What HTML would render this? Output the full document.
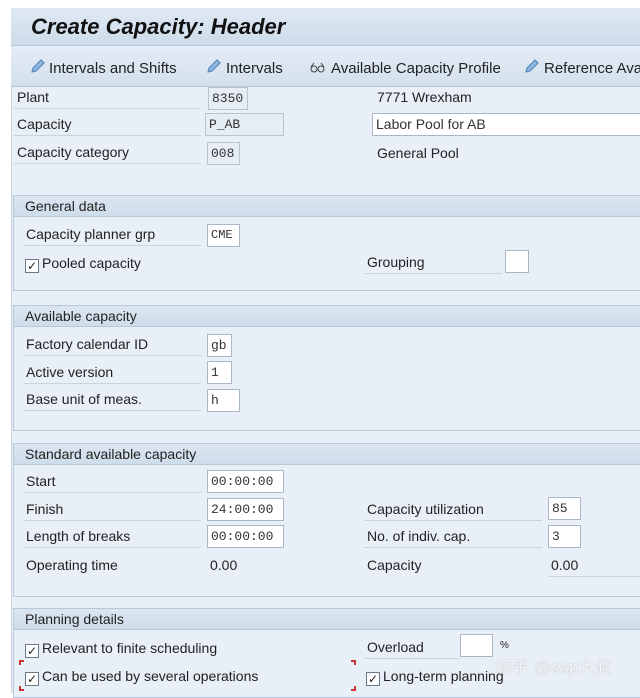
<!DOCTYPE html>
<html><head><meta charset="utf-8">
<style>
*{margin:0;padding:0;box-sizing:border-box}
body{width:640px;height:693px;overflow:hidden;background:#fff;font-family:"Liberation Sans","DejaVu Sans",sans-serif;font-size:14px;color:#222;position:relative}
.a{position:absolute}
#main{left:11px;top:8px;width:629px;height:685px;background:#e8eff7;border-left:1px solid #c6d3e0}
#title{left:11px;top:8px;width:629px;height:38px;background:linear-gradient(#dfe9f3,#cddcea);border-bottom:1px solid #b7c9da}
#title span{position:absolute;left:20px;top:6px;font-size:22px;font-weight:bold;font-style:italic;color:#111}
#tb{left:11px;top:47px;width:629px;height:40px;background:linear-gradient(#e4ecf5,#d3e0ec);border-bottom:1px solid #b7c9da}
.tbi{position:absolute;top:13px;font-size:15px;color:#222;white-space:nowrap}
.lbl{position:absolute;height:22px;line-height:20px;border-bottom:1px solid #c9d3dd;white-space:nowrap}
.in{position:absolute;height:23px;background:#fff;border:1px solid #a9b7c6;font-family:"Liberation Mono",monospace;font-size:13px;line-height:21px;padding-left:3px;color:#333}
.ro{background:#e6edf4;border-color:#b8c4d0}
.grp{position:absolute;left:13px;width:640px;border:1px solid #b9c8d8;background:#e8eff7}
.gh{height:21px;background:linear-gradient(#dbe6f1,#cfdcea);border-bottom:1px solid #b9c8d8;padding-left:11px;line-height:20px}
.txt{position:absolute;white-space:nowrap}
.cb{display:inline-block;width:14px;height:14px;border:1px solid #6a7a89;background:#fff;vertical-align:-2px;margin-right:3px;font-size:12px;line-height:12px;text-align:center;color:#222;font-weight:bold}
.rc{position:absolute;width:5px;height:5px;border-color:#c33;border-style:solid;border-width:0}
</style></head><body>
<div class="a" id="main"></div>
<div class="a" id="title"><span>Create Capacity: Header</span></div>
<div class="a" id="tb">
<svg class="a" style="left:18px;top:12px" width="16" height="16" viewBox="0 0 16 16"><path d="M3 13 L4 9 L12 1 L15 4 L7 12 Z" fill="#8fb8e0" stroke="#4a7fb5" stroke-width="1"/></svg>
<span class="tbi" style="left:38px">Intervals and Shifts</span>
<svg class="a" style="left:194px;top:12px" width="16" height="16" viewBox="0 0 16 16"><path d="M3 13 L4 9 L12 1 L15 4 L7 12 Z" fill="#8fb8e0" stroke="#4a7fb5" stroke-width="1"/></svg>
<span class="tbi" style="left:215px">Intervals</span>
<svg class="a" style="left:298px;top:14px" width="18" height="14" viewBox="0 0 18 14"><circle cx="5" cy="8" r="3" fill="none" stroke="#444"/><circle cx="12" cy="8" r="3" fill="none" stroke="#444"/><path d="M2 6 L5 2 M15 6 L12 2" stroke="#444" fill="none"/></svg>
<span class="tbi" style="left:320px">Available Capacity Profile</span>
<svg class="a" style="left:512px;top:12px" width="16" height="16" viewBox="0 0 16 16"><path d="M3 13 L4 9 L12 1 L15 4 L7 12 Z" fill="#8fb8e0" stroke="#4a7fb5" stroke-width="1"/></svg>
<span class="tbi" style="left:533px">Reference Ava</span>
</div>

<div class="lbl" style="left:14px;top:87px;width:187px;padding-left:3px">Plant</div>
<div class="in ro" style="left:208px;top:87px;width:40px">8350</div>
<div class="txt" style="left:377px;top:89px">7771 Wrexham</div>
<div class="lbl" style="left:14px;top:114px;width:187px;padding-left:3px">Capacity</div>
<div class="in ro" style="left:205px;top:113px;width:79px">P_AB</div>
<div class="in" style="left:372px;top:113px;width:270px;font-family:'Liberation Sans',sans-serif;font-size:14px">Labor Pool for AB</div>
<div class="lbl" style="left:14px;top:142px;width:187px;padding-left:3px">Capacity category</div>
<div class="in ro" style="left:207px;top:142px;width:33px">008</div>
<div class="txt" style="left:377px;top:145px">General Pool</div>

<div class="grp" style="top:195px;height:96px"><div class="gh">General data</div></div>
<div class="lbl" style="left:24px;top:224px;width:177px;padding-left:2px">Capacity planner grp</div>
<div class="in" style="left:207px;top:224px;width:33px;font-size:12px">CME</div>
<div class="txt" style="left:25px;top:255px"><span class="cb">✓</span>Pooled capacity</div>
<div class="lbl" style="left:364px;top:252px;width:138px;padding-left:3px">Grouping</div>
<div class="in" style="left:505px;top:250px;width:24px"></div>

<div class="grp" style="top:305px;height:126px"><div class="gh">Available capacity</div></div>
<div class="lbl" style="left:24px;top:334px;width:177px;padding-left:2px">Factory calendar ID</div>
<div class="in" style="left:207px;top:334px;width:25px">gb</div>
<div class="lbl" style="left:24px;top:362px;width:177px;padding-left:2px">Active version</div>
<div class="in" style="left:207px;top:361px;width:25px">1</div>
<div class="lbl" style="left:24px;top:389px;width:177px;padding-left:2px">Base unit of meas.</div>
<div class="in" style="left:207px;top:389px;width:33px">h</div>

<div class="grp" style="top:443px;height:154px"><div class="gh">Standard available capacity</div></div>
<div class="lbl" style="left:24px;top:471px;width:177px;padding-left:2px">Start</div>
<div class="in" style="left:207px;top:470px;width:77px">00:00:00</div>
<div class="lbl" style="left:24px;top:499px;width:177px;padding-left:2px">Finish</div>
<div class="in" style="left:207px;top:498px;width:77px">24:00:00</div>
<div class="lbl" style="left:24px;top:526px;width:177px;padding-left:2px">Length of breaks</div>
<div class="in" style="left:207px;top:525px;width:77px">00:00:00</div>
<div class="txt" style="left:26px;top:557px">Operating time</div>
<div class="txt" style="left:210px;top:557px">0.00</div>
<div class="lbl" style="left:364px;top:499px;width:178px;padding-left:3px">Capacity utilization</div>
<div class="in" style="left:548px;top:497px;width:33px">85</div>
<div class="lbl" style="left:364px;top:526px;width:178px;padding-left:3px">No. of indiv. cap.</div>
<div class="in" style="left:548px;top:525px;width:33px">3</div>
<div class="txt" style="left:367px;top:557px">Capacity</div>
<div class="lbl" style="left:548px;top:555px;width:92px;padding-left:3px">0.00</div>

<div class="grp" style="top:608px;height:90px"><div class="gh">Planning details</div></div>
<div class="txt" style="left:25px;top:640px"><span class="cb">✓</span>Relevant to finite scheduling</div>
<div class="lbl" style="left:364px;top:637px;width:95px;padding-left:3px">Overload</div>
<div class="in" style="left:460px;top:634px;width:33px"></div>
<div class="txt" style="left:500px;top:640px;font-size:10px">%</div>
<div class="txt" style="left:25px;top:668px"><span class="cb">✓</span>Can be used by several operations</div>
<div class="txt" style="left:366px;top:668px"><span class="cb">✓</span>Long-term planning</div>
<div class="rc" style="left:19px;top:660px;border-left-width:2px;border-top-width:2px"></div>
<div class="rc" style="left:19px;top:686px;border-left-width:2px;border-bottom-width:2px"></div>
<div class="rc" style="left:351px;top:660px;border-right-width:2px;border-top-width:2px"></div>
<div class="rc" style="left:351px;top:686px;border-right-width:2px;border-bottom-width:2px"></div>
<div class="txt" style="left:495px;top:653px;font-size:17px;color:#f4f6f9;font-family:'Liberation Sans','Noto Sans CJK SC',sans-serif;text-shadow:0 0 1px #999">知乎 @sap大叔</div>
</body></html>
